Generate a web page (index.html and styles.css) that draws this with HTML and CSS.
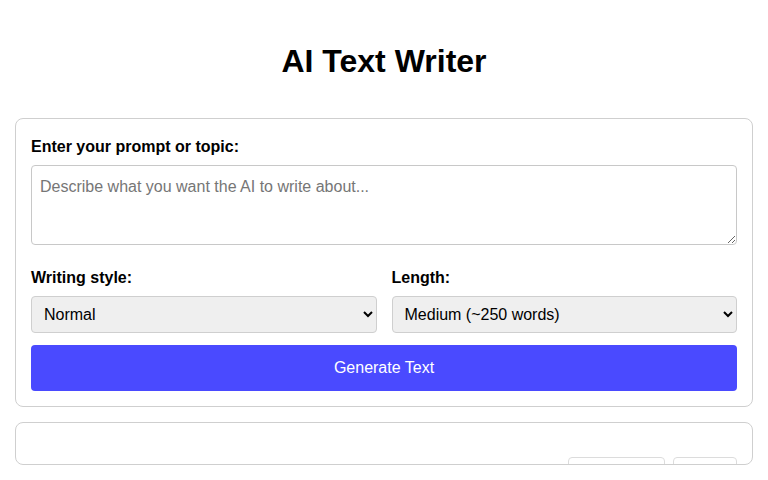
FILE: index.html
```html
<!DOCTYPE html>
<html lang="en">
<head>
<meta charset="utf-8">
<title>AI Text Writer</title>
<link rel="stylesheet" href="styles.css">
</head>
<body>
<main class="app">
  <h1 class="title">AI Text Writer</h1>

  <section class="card form-card">
    <label class="field-label" for="prompt">Enter your prompt or topic:</label>
    <textarea id="prompt" class="prompt" placeholder="Describe what you want the AI to write about..."></textarea>

    <div class="options">
      <div class="option">
        <label class="field-label" for="style">Writing style:</label>
        <select id="style" class="select">
          <option>Normal</option>
          <option>Formal</option>
          <option>Casual</option>
          <option>Creative</option>
        </select>
      </div>
      <div class="option">
        <label class="field-label" for="length">Length:</label>
        <select id="length" class="select">
          <option>Short (~100 words)</option>
          <option selected>Medium (~250 words)</option>
          <option>Long (~500 words)</option>
        </select>
      </div>
    </div>

    <button class="generate" type="button">Generate Text</button>
  </section>

  <section class="card output-card">
    <div class="output-actions">
      <button class="action copy" type="button" aria-label="Copy"></button>
      <button class="action clear" type="button" aria-label="Clear"></button>
    </div>
  </section>
</main>
</body>
</html>
```

FILE: styles.css
```css
* {
  box-sizing: border-box;
}

html, body {
  margin: 0;
  background: #fff;
}

body {
  font-family: "Liberation Sans", Arial, sans-serif;
  font-size: 16px;
  line-height: 1.5;
  color: #000;
}

.app {
  padding: 0 15px;
}

.title {
  margin: 37px 0 33px;
  font-size: 32px;
  line-height: 48px;
  font-weight: bold;
  text-align: center;
}

.card {
  border: 1px solid #cfcfcf;
  border-radius: 8px;
  padding: 15px;
  background: #fff;
}

.form-card {
  display: flex;
  flex-direction: column;
}

.field-label {
  display: block;
  font-weight: bold;
  line-height: 24px;
  margin-top: 1px;
  margin-bottom: 6px;
}

.prompt {
  display: block;
  width: 100%;
  height: 80px;
  padding: 9px 8px 7px;
  border: 1px solid #c8c8c8;
  border-radius: 4px;
  font-family: inherit;
  font-size: 16px;
  line-height: 1.5;
  resize: vertical;
}

.prompt::placeholder {
  color: #767676;
}

.options {
  display: grid;
  grid-template-columns: 1fr 1fr;
  gap: 15px;
  margin-top: 20px;
}

.select {
  display: block;
  width: 100%;
  height: 37px;
  padding: 0 8px;
  border: 1px solid #cfcfcf;
  border-radius: 4px;
  background-color: #efefef;
  font-family: inherit;
  font-size: 16px;
  color: #000;
}

.generate {
  margin-top: 12px;
  height: 46px;
  border: none;
  border-radius: 4px;
  background: #4a4aff;
  color: #fff;
  font-family: inherit;
  font-size: 16px;
  cursor: pointer;
}

.output-card {
  margin-top: 15px;
  height: 43px;
  overflow: hidden;
}

.output-actions {
  display: flex;
  justify-content: flex-end;
  gap: 8px;
  margin-top: 19px;
}

.action {
  height: 34px;
  border: 1px solid #dcdcdc;
  border-radius: 4px;
  background: #fff;
}

.copy {
  width: 97px;
}

.clear {
  width: 64px;
}
```
